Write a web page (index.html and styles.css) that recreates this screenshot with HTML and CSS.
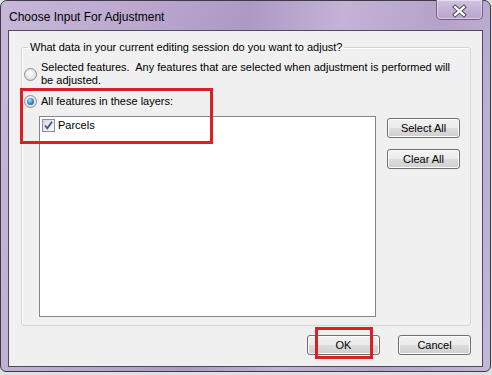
FILE: index.html
```html
<!DOCTYPE html>
<html>
<head>
<meta charset="utf-8">
<link rel="stylesheet" href="styles.css">
</head>
<body>
<div class="desktop">
  <div class="window">
    <div class="titlebar">
      <span class="title">Choose Input For Adjustment</span>
      <div class="close">
        <svg width="47" height="20" viewBox="0 0 47 20">
          <path d="M19 7 L28 15 M28 7 L19 15" stroke="#4a4558" stroke-width="4.4" stroke-linecap="square" fill="none"/>
          <path d="M19 7 L28 15 M28 7 L19 15" stroke="#ffffff" stroke-width="2.4" stroke-linecap="square" fill="none"/>
        </svg>
      </div>
    </div>
    <div class="client">
      <fieldset class="group">
        <legend class="legend">What data in your current editing session do you want to adjust?</legend>
        <div class="group-body">
          <div class="option">
            <span class="radio"></span>
            <span class="opt-text">Selected features.&nbsp; Any features that are selected when adjustment is performed will<br>be adjusted.</span>
          </div>
          <div class="option second">
            <span class="radio checked"></span>
            <span class="opt-text">All features in these layers:</span>
          </div>
          <div class="layers">
            <div class="listbox">
              <div class="item">
                <span class="check">
                  <svg width="11" height="11" viewBox="0 0 11 11"><path d="M2 5.5 L4.3 8.3 L9 1.8" stroke="#3d5595" stroke-width="1.8" fill="none"/></svg>
                </span>
                <span>Parcels</span>
              </div>
            </div>
            <div class="side-buttons">
              <button class="btn">Select All</button>
              <button class="btn">Clear All</button>
            </div>
          </div>
        </div>
      </fieldset>
      <div class="actions">
        <button class="btn">OK</button>
        <button class="btn">Cancel</button>
      </div>
    </div>
  </div>
  <div class="annot annot-layers"></div>
  <div class="annot annot-ok"></div>
</div>
</body>
</html>
```

FILE: styles.css
```css
html, body {
  margin: 0;
  padding: 0;
}
body {
  width: 492px;
  height: 375px;
  overflow: hidden;
  background: #d9e4dc;
  font-family: "Liberation Sans", Arial, sans-serif;
  font-size: 11px;
  color: #000;
}
.desktop {
  position: relative;
  width: 492px;
  height: 375px;
}
.window {
  box-sizing: border-box;
  width: 491px;
  height: 372px;
  border: 1px solid #3f3a48;
  border-radius: 7px 7px 6px 6px;
  background: linear-gradient(100deg, #c6b8d8 0%, #bba8cf 25%, #ad99c4 45%, #c3b3d6 62%, #b5a2ca 80%, #c5b7d8 100%);
  padding: 0 7px 4px 7px;
  display: flex;
  flex-direction: column;
}
.titlebar {
  height: 29px;
  display: flex;
  justify-content: space-between;
  align-items: flex-start;
  flex: none;
}
.title {
  font-family: "Liberation Sans", Arial, sans-serif;
  font-size: 12px;
  margin-top: 9px;
  margin-left: 1px;
  color: #000;
}
.close {
  width: 47px;
  height: 20px;
  margin-top: -1px;
  margin-right: 0px;
  box-sizing: border-box;
  border: 1px solid #6f5f86;
  border-top: none;
  border-radius: 0 0 5px 5px;
  background: linear-gradient(#d2c6df, #c0b0d3 55%, #b8a7cc);
  box-shadow: inset 0 0 0 1px rgba(255,255,255,0.45);
  display: flex;
  align-items: center;
  justify-content: center;
}
.close svg { display: block; }
.client {
  flex: 1;
  box-sizing: border-box;
  border: 1px solid #4f4a57;
  background: #f0f0f0;
  padding: 9px 11px 11px 12px;
  display: flex;
  flex-direction: column;
}
.group {
  flex: 1;
  margin: 0;
  padding: 0;
  border: 1px solid #d5d5d5;
  border-radius: 3px;
  min-inline-size: 0;
  box-shadow: inset 1px 1px 0 #fff;
}
.legend {
  margin-left: 6px;
  padding: 0 2px;
  line-height: 14px;
}
.group-body {
  padding: 7px 9px 6px 1px;
}
.option {
  display: flex;
  align-items: center;
  gap: 4px;
  line-height: 13px;
}
.option.second {
  margin-top: 8px;
}
.radio {
  flex: none;
  margin-left: 1px;
  width: 13px;
  height: 13px;
  box-sizing: border-box;
  border-radius: 50%;
  border: 1px solid #8c8e90;
  background: radial-gradient(circle at 45% 40%, #ffffff 0%, #e6e6e6 55%, #cfcfcf 100%);
  display: grid;
  place-items: center;
}
.radio.checked::after {
  content: "";
  width: 7px;
  height: 7px;
  border-radius: 50%;
  background: radial-gradient(circle at 40% 35%, #b4ecff 0%, #3a8fd8 45%, #1b4f93 100%);
}
.opt-text {
  white-space: nowrap;
}
.layers {
  margin-top: 8px;
  margin-left: 16px;
  display: flex;
  align-items: flex-start;
}
.listbox {
  width: 337px;
  height: 201px;
  box-sizing: border-box;
  border: 1px solid #82878f;
  background: #fff;
  padding: 1px 1px;
}
.item {
  display: flex;
  align-items: center;
  gap: 3px;
  height: 14px;
  padding-left: 1px;
}
.check {
  width: 13px;
  height: 13px;
  box-sizing: border-box;
  border: 1px solid #8c8e90;
  background: linear-gradient(135deg, #d8d8d8, #fafafa);
  display: flex;
  align-items: center;
  justify-content: center;
}
.check svg { display: block; }
.side-buttons {
  margin-left: 11px;
  margin-top: 2px;
  display: flex;
  flex-direction: column;
  gap: 11px;
}
.btn {
  width: 73px;
  height: 20px;
  box-sizing: border-box;
  border: 1px solid #707070;
  border-radius: 3px;
  background: linear-gradient(#f2f2f2 0%, #ebebeb 50%, #dddddd 51%, #cfcfcf 100%);
  box-shadow: inset 0 0 0 1px #fcfcfc;
  font-family: "Liberation Sans", Arial, sans-serif;
  font-size: 11px;
  color: #000;
  padding: 0;
}
.actions {
  margin-top: 9px;
  display: flex;
  justify-content: flex-end;
  gap: 18px;
}
.annot {
  position: absolute;
  box-sizing: border-box;
  border: 3px solid #dc1f27;
}
.annot-layers {
  left: 20px;
  top: 88px;
  width: 193px;
  height: 56px;
}
.annot-ok {
  left: 315px;
  top: 327px;
  width: 58px;
  height: 32px;
}
```
